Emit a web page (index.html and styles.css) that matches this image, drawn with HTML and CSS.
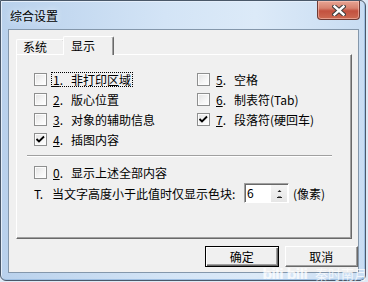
FILE: index.html
```html
<!DOCTYPE html>
<html lang="zh-CN">
<head>
    <meta charset="UTF-8">
    <title>综合设置</title>
    <link rel="stylesheet" href="styles.css">
</head>
<body>
    <div class="window">
        <div class="titlebar">
            <span class="title">综合设置</span>
            <div class="close-btn">
                <svg width="14" height="11" viewBox="0 0 14 11">
                    <path d="M2.5 1.5 L11.5 9.5 M11.5 1.5 L2.5 9.5" stroke="#3b3b3b" stroke-width="4.4" stroke-linecap="square"/>
                    <path d="M2.5 1.5 L11.5 9.5 M11.5 1.5 L2.5 9.5" stroke="#fff" stroke-width="2.4" stroke-linecap="square"/>
                </svg>
            </div>
        </div>

        <div class="dialog">
            <div class="tabs">
                <div class="tab">系统</div>
                <div class="tab active">显示</div>
            </div>

            <div class="panel">
                <div class="options">
                    <div class="opt"><span class="box"></span><span class="label focus"><span class="num"><u>1</u>.</span>非打印区域</span></div>
                    <div class="opt"><span class="box"></span><span class="label"><span class="num"><u>2</u>.</span>版心位置</span></div>
                    <div class="opt"><span class="box"></span><span class="label"><span class="num"><u>3</u>.</span>对象的辅助信息</span></div>
                    <div class="opt"><span class="box checked"><svg width="11" height="11" viewBox="0 0 11 11"><path d="M1.5 5 L4 7.5 L9 2.5" fill="none" stroke="#000" stroke-width="1.8"/></svg></span><span class="label"><span class="num"><u>4</u>.</span>插图内容</span></div>
                    <div class="opt"><span class="box"></span><span class="label"><span class="num"><u>5</u>.</span>空格</span></div>
                    <div class="opt"><span class="box"></span><span class="label"><span class="num"><u>6</u>.</span>制表符(Tab)</span></div>
                    <div class="opt"><span class="box checked"><svg width="11" height="11" viewBox="0 0 11 11"><path d="M1.5 5 L4 7.5 L9 2.5" fill="none" stroke="#000" stroke-width="1.8"/></svg></span><span class="label"><span class="num"><u>7</u>.</span>段落符(硬回车)</span></div>
                </div>

                <div class="sep"></div>

                <div class="opt row-all"><span class="box"></span><span class="label"><span class="num"><u>0</u>.</span>显示上述全部内容</span></div>

                <div class="row-limit">
                    <span class="num">T.</span>
                    <span class="limit-text">当文字高度小于此值时仅显示色块:</span>
                    <div class="spin">
                        <span class="spin-value">6</span>
                        <span class="spin-btns">
                            <svg width="9" height="14" viewBox="0 0 9 14">
                                <path d="M4.5 3 L6.5 5 L2.5 5 Z" fill="#222"/>
                                <path d="M2 10 L7 10 L7 11 L2 11 Z" fill="#222"/>
                                <path d="M3 9 L6 9 L6 10 L3 10 Z" fill="#888"/>
                            </svg>
                        </span>
                    </div>
                    <span class="unit">(像素)</span>
                </div>
            </div>

            <div class="buttons">
                <div class="btn default">确定</div>
                <div class="btn">取消</div>
            </div>
        </div>

        <div class="watermark"><span class="wm-logo">bili bili</span><span class="wm-name">秦时南月</span></div>
    </div>
</body>
</html>
```

FILE: styles.css
```css
* {
    margin: 0;
    padding: 0;
    box-sizing: border-box;
}

body {
    width: 368px;
    height: 282px;
    overflow: hidden;
    background: #dfe9f5;
    font-family: "Noto Sans CJK SC", "Liberation Sans", sans-serif;
    font-size: 12px;
    color: #000;
}

/* window frame */
.window {
    position: relative;
    width: 366px;
    height: 281px;
    border: 1px solid #4a5869;
    border-radius: 0 6px 6px 6px;
    padding: 0 6px 6px 7px;
    background: linear-gradient(to right, #b9d1ec 0%, #d3e4f6 45%, #dceaf8 70%, #c8dcf2 100%);
    box-shadow: inset 1px 1px 0 #e4eefa, inset -1px -1px 0 #9fbfe2;
}

.titlebar {
    height: 28px;
    display: flex;
    align-items: center;
    padding-left: 2px;
}

.title {
    font-size: 12px;
    color: #000;
    text-shadow: 0 0 6px #eef5fd;
}

.close-btn {
    position: absolute;
    top: 0;
    right: 5px;
    width: 43px;
    height: 19px;
    border: 1px solid #6e3a34;
    border-top: none;
    border-radius: 0 0 4px 4px;
    background: linear-gradient(#e8a594 0%, #d7826f 40%, #c3513f 55%, #cd6a52 100%);
    box-shadow: inset 0 0 0 1px rgba(255,210,200,0.5);
    display: flex;
    justify-content: center;
    align-items: center;
}

/* dialog client area */
.dialog {
    width: 351px;
    height: 244px;
    border: 1px solid #8497ab;
    background: #f0f0f0;
    padding: 6px 0 0 7px;
}

.tabs {
    display: flex;
    align-items: flex-end;
    height: 19px;
    margin-bottom: -1px;
}

.tab {
    position: relative;
    width: 49px;
    height: 15px;
    margin-bottom: 1px;
    padding-left: 6px;
    line-height: 14px;
    background: #f0f0f0;
    border-top: 1px solid #fff;
    border-left: 1px solid #fff;
    border-right: 1px solid #696969;
    border-radius: 2px 2px 0 0;
    box-shadow: inset -1px 0 0 #a0a0a0;
}

.tab.active {
    z-index: 1;
    width: 51px;
    height: 19px;
    margin-left: -2px;
    margin-bottom: 0;
    padding-left: 7px;
    line-height: 17px;
}

.panel {
    width: 336px;
    height: 185px;
    border-top: 1px solid #fff;
    border-left: 1px solid #fff;
    border-right: 1px solid #696969;
    border-bottom: 1px solid #696969;
    box-shadow: inset -1px -1px 0 #a0a0a0;
    padding: 14px 0 0 10px;
}

.options {
    display: grid;
    grid-template-columns: 163px auto;
    grid-template-rows: repeat(4, 20px);
    grid-auto-flow: column;
    margin-left: 7px;
}

.opt {
    display: flex;
    align-items: center;
    height: 20px;
}

.box {
    width: 13px;
    height: 13px;
    margin-right: 4px;
    border: 1px solid #8e8f8f;
    background: linear-gradient(135deg, #e2e2e2 0%, #f6f6f6 60%, #fff 100%);
    box-shadow: inset 0 0 0 1px #fcfcfc;
    display: flex;
    justify-content: center;
    align-items: center;
}

.label {
    display: flex;
    align-items: center;
    height: 15px;
    padding-left: 1px;
    padding-right: 1px;
    border: 1px dotted transparent;
    white-space: nowrap;
}

.label.focus {
    border-color: #000;
}

.num {
    display: inline-block;
    width: 18px;
    flex: none;
}

.sep {
    width: 305px;
    height: 2px;
    margin-top: 6px;
    border-top: 1px solid #a0a0a0;
    border-bottom: 1px solid #fff;
}

.row-all {
    margin-top: 5px;
    margin-left: 7px;
}

.row-limit {
    display: flex;
    align-items: center;
    height: 20px;
    margin-top: 1px;
    margin-left: 7px;
    white-space: nowrap;
}

.limit-text {
    width: 186px;
}

.spin {
    display: flex;
    width: 45px;
    height: 20px;
    margin-left: 6px;
    background: #fff;
    border-top: 1px solid #a0a0a0;
    border-left: 1px solid #a0a0a0;
    border-right: 1px solid #fff;
    border-bottom: 1px solid #fff;
    box-shadow: inset 1px 1px 0 #696969;
}

.spin-value {
    flex: 1;
    padding: 1px 0 0 2px;
    line-height: 16px;
}

.spin-btns {
    width: 16px;
    margin: 1px 1px 0 0;
    background: linear-gradient(#f4f4f4, #e6e6e6);
    display: flex;
    justify-content: center;
    align-items: center;
}

.unit {
    margin-left: 4px;
}

.buttons {
    display: flex;
    gap: 6px;
    margin-top: 7px;
    padding-left: 189px;
}

.btn {
    width: 75px;
    height: 21px;
    line-height: 19px;
    text-align: center;
    background: #f0f0f0;
    border-top: 1px solid #fff;
    border-left: 1px solid #fff;
    border-right: 1px solid #696969;
    border-bottom: 1px solid #696969;
    box-shadow: inset -1px -1px 0 #a0a0a0;
}

.btn.default {
    border: 1px solid #000;
    box-shadow: inset 1px 1px 0 #fff, inset -1px -1px 0 #696969, inset -2px -2px 0 #a0a0a0;
}

/* overlay watermark */
.watermark {
    position: absolute;
    right: -2px;
    bottom: -1px;
    display: flex;
    align-items: flex-end;
    gap: 8px;
    line-height: 14px;
    color: rgba(255,255,255,0.75);
    pointer-events: none;
}

.wm-logo {
    font-family: "DejaVu Sans", sans-serif;
    font-weight: bold;
    font-size: 14px;
    letter-spacing: -1px;
}

.wm-name {
    font-size: 13px;
}
```
